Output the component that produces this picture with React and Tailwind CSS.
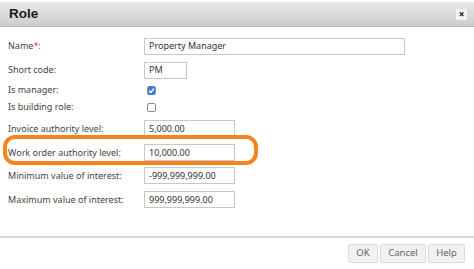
const rows = [
  { label: 'Name', required: true, kind: 'text', value: 'Property Manager', w: 'w-[261px]', h: 'h-[24px]' },
  { label: 'Short code:', kind: 'text', value: 'PM', w: 'w-[43px]', h: 'h-[24px]' },
  { label: 'Is manager:', kind: 'check', checked: true, h: 'h-[16px]' },
  { label: 'Is building role:', kind: 'check', checked: false, h: 'h-[18px]' },
  { label: 'Invoice authority level:', kind: 'text', value: '5,000.00', w: 'w-[91px]', h: 'h-[25px]' },
  { label: 'Work order authority level:', kind: 'text', value: '10,000.00', w: 'w-[91px]', h: 'h-[23px]' },
  { label: 'Minimum value of interest:', kind: 'text', value: '-999,999,999.00', w: 'w-[91px]', h: 'h-[23px]' },
  { label: 'Maximum value of interest:', kind: 'text', value: '999,999,999.00', w: 'w-[91px]', h: 'h-[25px]' },
];

function Field({ row }) {
  if (row.kind === 'check') {
    return (
      <div className="ml-[3px] w-[9px] h-[9px] rounded-[2px] flex items-center justify-center border border-[#8a8a8a] bg-white">
        {row.checked && (
          <div className="w-[9px] h-[9px] rounded-[2px] bg-[#3b7de0] flex items-center justify-center">
            <svg width="7" height="7" viewBox="0 0 8 8">
              <path d="M1.2 4.2 L3.2 6.2 L6.8 1.8" fill="none" stroke="white" strokeWidth="1.6" />
            </svg>
          </div>
        )}
      </div>
    );
  }
  return (
    <div className={`${row.w} h-[17px] border border-[#c8c8c8] bg-white flex items-center px-[4px] text-[#333]`}>
      {row.value}
    </div>
  );
}

export default function App() {
  return (
    <div
      className="relative w-[474px] h-[269px] bg-white overflow-hidden text-[9px] text-[#444]"
      style={{ fontFamily: '"Noto Sans", Verdana, sans-serif' }}
    >
      {/* Title bar */}
      <div className="mt-[2px] h-[25px] flex items-center justify-between px-[9px] bg-gradient-to-b from-[#e9e9e9] to-[#cdcdcd] border-b border-[#b9b9b9]">
        <span className="text-[13.5px] font-bold text-[#1a1a1a]" style={{ fontFamily: '"Liberation Sans", Arial, sans-serif' }}>
          Role
        </span>
        <div className="w-[11px] h-[11px] bg-[#f3f3f3] flex items-center justify-center text-[10px] font-bold text-[#111] leading-none mr-[-2px]">
          ×
        </div>
      </div>

      {/* Form */}
      <div className="mt-[7px] flex flex-col">
        {rows.map((row) => (
          <div key={row.label} className={`flex items-center ${row.h}`}>
            <div className="w-[144px] pl-[8px]">
              {row.label}
              {row.required && (
                <>
                  <span className="text-[#e04040]">*</span>:
                </>
              )}
            </div>
            <Field row={row} />
          </div>
        ))}
      </div>

      {/* Highlight */}
      <div className="absolute left-[3px] top-[135px] w-[255px] h-[30px] border-[4.5px] border-[#f7821e] rounded-[12px]" />

      {/* Footer */}
      <div className="absolute left-0 right-0 top-[236px] h-[2px] bg-[#d9d9d9]" />
      <div className="absolute right-[9px] top-[244px] flex gap-[2px] text-[9.5px] text-[#666]">
        <div className="w-[30px] h-[19px] flex items-center justify-center bg-[#f1f1f1] border border-[#dcdcdc] rounded-[2px]">OK</div>
        <div className="w-[46px] h-[19px] flex items-center justify-center bg-[#f1f1f1] border border-[#dcdcdc] rounded-[2px]">Cancel</div>
        <div className="w-[37px] h-[19px] flex items-center justify-center bg-[#f1f1f1] border border-[#dcdcdc] rounded-[2px]">Help</div>
      </div>
    </div>
  );
}
